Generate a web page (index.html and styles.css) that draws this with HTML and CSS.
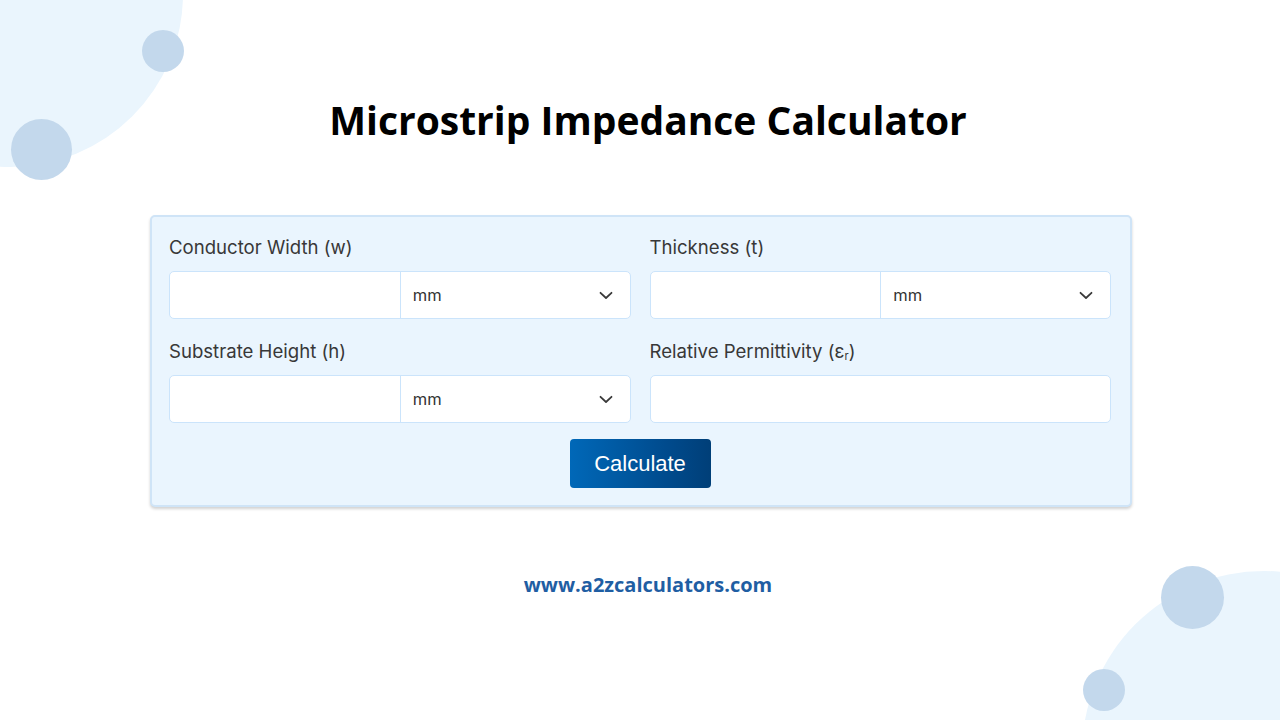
FILE: index.html
```html
<!DOCTYPE html>
<html lang="en">
<head>
<meta charset="utf-8">
<title>Microstrip Impedance Calculator</title>
<link rel="stylesheet" href="styles.css">
</head>
<body>
<div class="page">
  <div class="deco deco-tl-big"></div>
  <div class="deco deco-tl-a dot"></div>
  <div class="deco deco-tl-b dot"></div>
  <div class="deco deco-br-big"></div>
  <div class="deco deco-br-a dot"></div>
  <div class="deco deco-br-b dot"></div>

  <main class="content">
    <h1 class="title">Microstrip Impedance Calculator</h1>

    <form class="card">
      <div class="grid">
        <div class="field">
          <label class="label">Conductor Width (w)</label>
          <div class="group">
            <input class="input" type="text">
            <div class="select"><span>mm</span><svg class="chev" viewBox="0 0 14 9" width="14" height="9"><path d="M1.5 1.8 L7 7 L12.5 1.8" fill="none" stroke="#3a3a3a" stroke-width="1.8" stroke-linecap="round" stroke-linejoin="round"/></svg></div>
          </div>
        </div>
        <div class="field">
          <label class="label">Thickness (t)</label>
          <div class="group">
            <input class="input" type="text">
            <div class="select"><span>mm</span><svg class="chev" viewBox="0 0 14 9" width="14" height="9"><path d="M1.5 1.8 L7 7 L12.5 1.8" fill="none" stroke="#3a3a3a" stroke-width="1.8" stroke-linecap="round" stroke-linejoin="round"/></svg></div>
          </div>
        </div>
        <div class="field">
          <label class="label">Substrate Height (h)</label>
          <div class="group">
            <input class="input" type="text">
            <div class="select"><span>mm</span><svg class="chev" viewBox="0 0 14 9" width="14" height="9"><path d="M1.5 1.8 L7 7 L12.5 1.8" fill="none" stroke="#3a3a3a" stroke-width="1.8" stroke-linecap="round" stroke-linejoin="round"/></svg></div>
          </div>
        </div>
        <div class="field">
          <label class="label">Relative Permittivity (ε<sub>r</sub>)</label>
          <div class="group">
            <input class="input input-full" type="text">
          </div>
        </div>
      </div>
      <div class="actions">
        <button class="btn" type="button">Calculate</button>
      </div>
    </form>

    <p class="footer">www.a2zcalculators.com</p>
  </main>
</div>
</body>
</html>
```
FILE: styles.css
```css
* { box-sizing: border-box; }
html, body { margin: 0; padding: 0; background: #ffffff; }
.page {
  position: relative;
  width: 1280px;
  height: 720px;
  overflow: hidden;
  font-family: Inter, "Noto Sans", sans-serif;
}
.deco { position: absolute; border-radius: 50%; }
.deco-tl-big { left: -163px; top: -179px; width: 346px; height: 346px; background: #eaf5fd; }
.deco-br-big { left: 1082px; top: 571px; width: 364px; height: 364px; background: #eaf5fd; }
.dot { background: #c3d8ec; }
.deco-tl-a { left: 142px; top: 30px; width: 42px; height: 42px; }
.deco-tl-b { left: 11px; top: 119px; width: 61px; height: 61px; }
.deco-br-a { left: 1161px; top: 566px; width: 63px; height: 63px; }
.deco-br-b { left: 1083px; top: 669px; width: 42px; height: 42px; }

.content { position: relative; padding-top: 93px; }
.title {
  margin: 0;
  text-align: center;
  font-family: "Open Sans", sans-serif;
  font-weight: 700;
  font-size: 39px;
  line-height: 53px;
  color: #000;
  padding-left: 16px;
}
.card {
  margin: 69px 0 0 150px;
  width: 982px;
  background: #eaf5fe;
  border: 2px solid #cfe4f7;
  border-radius: 5px;
  box-shadow: 0 2px 3px rgba(0, 0, 0, 0.18);
  padding: 19px 19px 17px 17px;
}
.grid {
  display: grid;
  grid-template-columns: 1fr 1fr;
  column-gap: 19px;
  row-gap: 21px;
}
.field { display: flex; flex-direction: column; }
.label {
  font-size: 18.6px;
  line-height: 22px;
  color: #383838;
  margin-bottom: 13px;
}
.label sub { font-size: 11px; vertical-align: -2px; line-height: 0; }
.group {
  display: flex;
  height: 48px;
  background: #fff;
  border: 1.5px solid #cbe4fb;
  border-radius: 5px;
  overflow: hidden;
}
.input {
  width: 50%;
  min-width: 0;
  border: none;
  outline: none;
  background: transparent;
  font-family: inherit;
  font-size: 16px;
}
.input-full { width: 100%; }
.select {
  width: 50%;
  display: flex;
  align-items: center;
  justify-content: space-between;
  padding: 0 17px 0 12px;
  border-left: 1.5px solid #cbe4fb;
  font-size: 16.5px;
  color: #333;
}
.chev { display: block; }
.actions { display: flex; justify-content: center; margin-top: 16px; }
.btn {
  width: 141px;
  height: 49px;
  border: none;
  border-radius: 4px;
  background: linear-gradient(90deg, #0068b8 0%, #004a8c 70%, #003f78 100%);
  color: #fff;
  font-family: "Liberation Sans", Arial, sans-serif;
  font-size: 22px;
  padding: 0;
}
.footer {
  margin: 64px 0 0;
  text-align: center;
  font-family: "Open Sans", sans-serif;
  font-weight: 700;
  font-size: 20px;
  line-height: 27px;
  color: #1f5ea3;
  padding-left: 16px;
}
```
